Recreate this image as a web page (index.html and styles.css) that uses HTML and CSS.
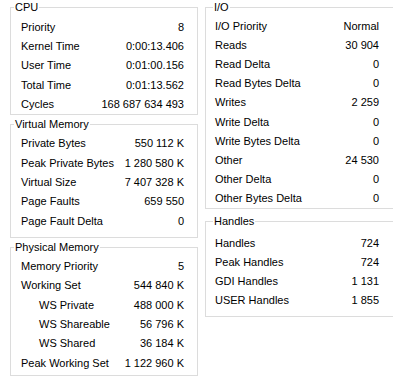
FILE: index.html
```html
<!DOCTYPE html>
<html lang="en">
<head>
    <meta charset="UTF-8">
    <title>Performance</title>
    <link rel="stylesheet" href="styles.css">
</head>
<body>

<div class="page">
    <div class="col left">
        <fieldset class="box cpu">
            <legend>CPU</legend>
            <div class="row"><span>Priority</span><span>8</span></div>
            <div class="row"><span>Kernel Time</span><span>0:00:13.406</span></div>
            <div class="row"><span>User Time</span><span>0:01:00.156</span></div>
            <div class="row"><span>Total Time</span><span>0:01:13.562</span></div>
            <div class="row"><span>Cycles</span><span>168 687 634 493</span></div>
        </fieldset>

        <fieldset class="box vm">
            <legend>Virtual Memory</legend>
            <div class="row"><span>Private Bytes</span><span>550 112 K</span></div>
            <div class="row"><span>Peak Private Bytes</span><span>1 280 580 K</span></div>
            <div class="row"><span>Virtual Size</span><span>7 407 328 K</span></div>
            <div class="row"><span>Page Faults</span><span>659 550</span></div>
            <div class="row"><span>Page Fault Delta</span><span>0</span></div>
        </fieldset>

        <fieldset class="box pm">
            <legend>Physical Memory</legend>
            <div class="row"><span>Memory Priority</span><span>5</span></div>
            <div class="row"><span>Working Set</span><span>544 840 K</span></div>
            <div class="row sub"><span>WS Private</span><span>488 000 K</span></div>
            <div class="row sub"><span>WS Shareable</span><span>56 796 K</span></div>
            <div class="row sub"><span>WS Shared</span><span>36 184 K</span></div>
            <div class="row"><span>Peak Working Set</span><span>1 122 960 K</span></div>
        </fieldset>
    </div>

    <div class="col right">
        <fieldset class="box io">
            <legend>I/O</legend>
            <div class="row"><span>I/O Priority</span><span>Normal</span></div>
            <div class="row"><span>Reads</span><span>30 904</span></div>
            <div class="row"><span>Read Delta</span><span>0</span></div>
            <div class="row"><span>Read Bytes Delta</span><span>0</span></div>
            <div class="row"><span>Writes</span><span>2 259</span></div>
            <div class="row"><span>Write Delta</span><span>0</span></div>
            <div class="row"><span>Write Bytes Delta</span><span>0</span></div>
            <div class="row"><span>Other</span><span>24 530</span></div>
            <div class="row"><span>Other Delta</span><span>0</span></div>
            <div class="row"><span>Other Bytes Delta</span><span>0</span></div>
        </fieldset>

        <fieldset class="box handles">
            <legend>Handles</legend>
            <div class="row"><span>Handles</span><span>724</span></div>
            <div class="row"><span>Peak Handles</span><span>724</span></div>
            <div class="row"><span>GDI Handles</span><span>1 131</span></div>
            <div class="row"><span>USER Handles</span><span>1 855</span></div>
        </fieldset>
    </div>
</div>

</body>
</html>
```

FILE: styles.css
```css
html, body {
    margin: 0;
    background: #fff;
    overflow: hidden;
}
body {
    font-family: "Liberation Sans", Arial, sans-serif;
    font-size: 11px;
    color: #000;
}
.page {
    display: flex;
    align-items: flex-start;
    padding: 1px 0 0 10px;
}
.col {
    display: flex;
    flex-direction: column;
}
.left {
    width: 188px;
}
.right {
    width: 188px;
    margin-left: 7px;
}
.box {
    margin: 0;
    border: 1px solid #dcdcdc;
    padding: 0 13px 0 3px;
    min-width: 0;
}
.box legend {
    padding: 0 1px;
    line-height: 13px;
}
.row {
    display: flex;
    justify-content: space-between;
    align-items: center;
    height: 19.33px;
    padding-left: 7px;
    white-space: nowrap;
}
.row.sub {
    padding-left: 25px;
}

/* left column */
.cpu {
    padding-top: 3px;
}
.vm {
    margin-top: 3px;
    padding-top: 3px;
    padding-bottom: 7px;
}
.pm {
    margin-top: 3px;
    padding-top: 2px;
    padding-bottom: 3px;
}

/* right column: the frame runs on past the window edge */
.right .box {
    border-right: none;
    padding-left: 7px;
    padding-right: 14px;
}
.right .row {
    padding-left: 2px;
}
.io {
    padding-top: 2px;
}
.io .row {
    height: 19.2px;
}
.handles {
    margin-top: 6px;
    padding-top: 6px;
    padding-bottom: 7px;
}
.handles .row {
    height: 18.8px;
}
```
